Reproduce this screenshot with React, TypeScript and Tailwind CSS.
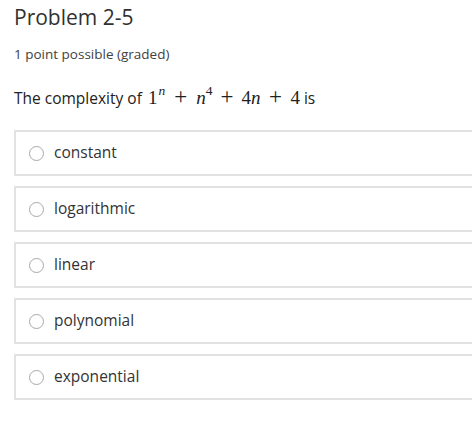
const options = ['constant', 'logarithmic', 'linear', 'polynomial', 'exponential'];

// 1^n + n^4 + 4n + 4, set like the TeX output in the reference
function Formula() {
  return (
    <span className="ml-[2px] font-['Liberation_Serif',serif] text-[19px] leading-none text-[#222]">
      1<sup className="italic text-[13.5px] leading-none -top-[9px] ml-px">n</sup>
      <span className="inline-block w-[31px] text-center text-[23px] leading-none">+</span>
      <span className="italic">n</span>
      <sup className="text-[13.5px] leading-none -top-[9px]">4</sup>
      <span className="inline-block w-[29px] text-center text-[23px] leading-none">+</span>
      4<span className="italic">n</span>
      <span className="inline-block w-[30px] text-center text-[23px] leading-none">+</span>4
    </span>
  );
}

export default function App() {
  return (
    <div className="bg-white min-h-[435px] pl-[14px] font-['Open_Sans',sans-serif] text-[#313131]">
      <h2 className="pt-[2px] text-[21px] leading-[30px]">Problem 2-5</h2>
      <div className="mt-[12px] text-[13.5px] leading-[20px] text-[#414141]">1 point possible (graded)</div>
      <p className="mt-[21px] text-[15.5px] leading-[24px] text-[#222]">
        The complexity of <Formula /> is
      </p>
      <div className="mt-[20px] flex flex-col gap-[10px]">
        {options.map((opt) => (
          <label
            key={opt}
            className="flex items-center h-[46px] border-2 border-r-0 border-[#e2e2e2] pl-[13px] gap-[10px]"
          >
            <span className="w-[15px] h-[15px] rounded-full border border-[#a8a8a8] bg-white shrink-0" />
            <span className="text-[15.5px] text-[#333]">{opt}</span>
          </label>
        ))}
      </div>
    </div>
  );
}
